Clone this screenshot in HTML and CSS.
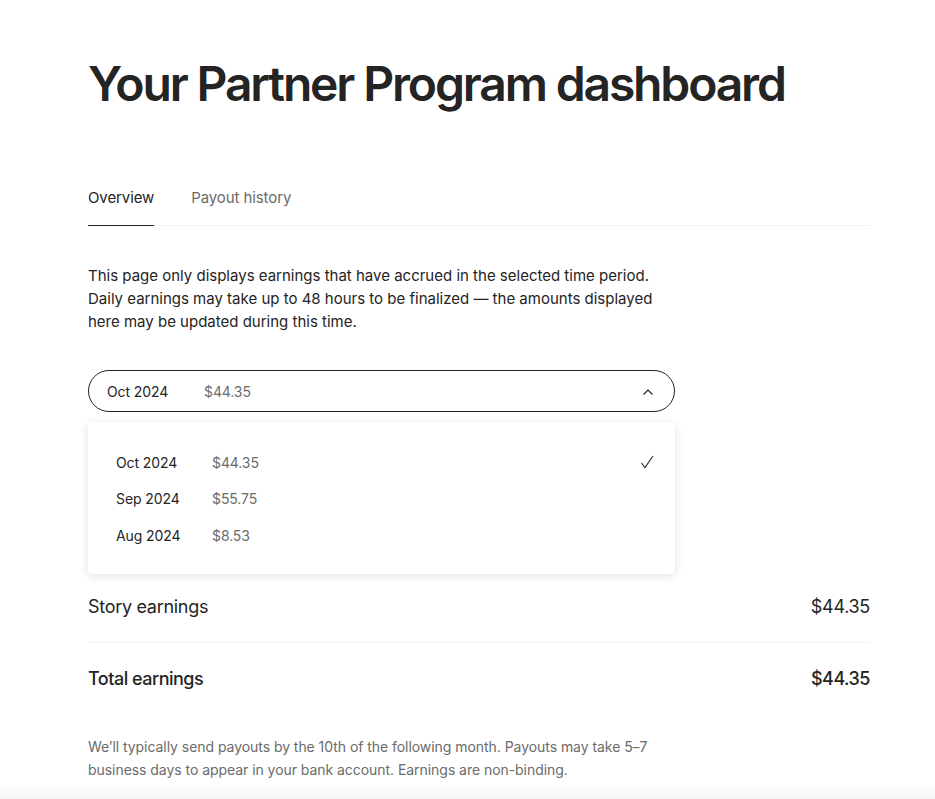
FILE: index.html
```html
<!DOCTYPE html>
<html>
<head>
<meta charset="utf-8">
<title>Partner Program dashboard</title>
<link rel="stylesheet" href="styles.css">
</head>
<body>
<div class="page">
	<h1 class="title">Your Partner Program dashboard</h1>

	<div class="tabs">
		<a class="tab active">Overview</a>
		<a class="tab">Payout history</a>
	</div>

	<p class="intro">This page only displays earnings that have accrued in the selected time period. Daily earnings may take up to 48 hours to be finalized — the amounts displayed here may be updated during this time.</p>

	<div class="picker">
		<button class="select">
			<span class="month">Oct 2024</span>
			<span class="amount">$44.35</span>
			<svg class="chevron" width="14" height="14" viewBox="0 0 14 14"><path d="M2.5 9.5 7 5l4.5 4.5" fill="none" stroke="#242424" stroke-width="1.2"/></svg>
		</button>
		<ul class="menu">
			<li class="option"><span class="month">Oct 2024</span><span class="amount">$44.35</span><svg class="check" width="16" height="16" viewBox="0 0 16 16"><path d="M2.5 9 6 13.5 14 2" fill="none" stroke="#242424" stroke-width="1.1"/></svg></li>
			<li class="option"><span class="month">Sep 2024</span><span class="amount">$55.75</span></li>
			<li class="option"><span class="month">Aug 2024</span><span class="amount">$8.53</span></li>
		</ul>
	</div>

	<div class="row">
		<span>Story earnings</span>
		<span>$44.35</span>
	</div>
	<div class="row total">
		<span>Total earnings</span>
		<span>$44.35</span>
	</div>

	<p class="note">We’ll typically send payouts by the 10th of the following month. Payouts may take 5–7 business days to appear in your bank account. Earnings are non-binding.</p>
</div>
<div class="fade"></div>
</body>
</html>
```

FILE: styles.css
```css
body{
	margin:0;
	color:#242424;
	background:#fff;
	font-family:Inter,'Noto Sans',sans-serif;
}
*,:after,:before{box-sizing:border-box}

.page{
	width:782px;
	margin:0 0 0 88px;
	padding-top:56px;
}
.title{
	margin:0;
	font-size:48px;
	line-height:56px;
	font-weight:600;
	letter-spacing:-2.15px;
}

.tabs{
	display:flex;
	gap:37px;
	margin-top:76px;
	border-bottom:1px solid #f2f2f2;
}
.tab{
	font-size:15px;
	line-height:20px;
	padding-bottom:17px;
	color:#6b6b6b;
	margin-bottom:-1px;
	border-bottom:1px solid transparent;
	letter-spacing:-0.1px;
}
.tab.active{
	color:#242424;
	border-color:#242424;
}

.intro{
	width:590px;
	margin:38px 0 0 0;
	font-size:15px;
	line-height:23px;
}

.picker{
	position:relative;
	width:587px;
	margin-top:37px;
}
.select{
	display:flex;
	align-items:center;
	width:100%;
	height:42px;
	padding:1px 18px 0 18px;
	border:1px solid #242424;
	border-radius:21px;
	background:#fff;
	font:inherit;
	font-size:14px;
	color:#242424;
	letter-spacing:-0.1px;
}
.month{width:97px;text-align:left}
.amount{color:#6b6b6b}
.chevron{margin-left:auto;margin-right:1px}

.menu{
	position:absolute;
	top:52px;
	left:0;
	right:0;
	margin:0;
	padding:22px 20px 20.5px 28px;
	list-style:none;
	background:#fff;
	border-radius:4px;
	box-shadow:0 2px 10px rgba(0,0,0,.12);
	z-index:2;
}
.option{
	display:flex;
	align-items:center;
	height:36.5px;
	font-size:14px;
	letter-spacing:-0.1px;
}
.option .month{width:96px}
.check{margin-left:auto}

.row{
	display:flex;
	justify-content:space-between;
	align-items:center;
	height:72px;
	font-size:18px;
	letter-spacing:-0.3px;
}
.picker + .row{margin-top:158px}
.row + .row{border-top:1px solid #f2f2f2}
.row.total{font-weight:500;letter-spacing:-0.5px}

.note{
	width:570px;
	margin:21px 0 0 0;
	font-size:14px;
	line-height:23px;
	color:#6b6b6b;
	letter-spacing:-0.05px;
}

.fade{
	position:fixed;
	left:0;
	right:0;
	bottom:0;
	height:16px;
	background:linear-gradient(rgba(0,0,0,0),rgba(0,0,0,.035));
}
```
